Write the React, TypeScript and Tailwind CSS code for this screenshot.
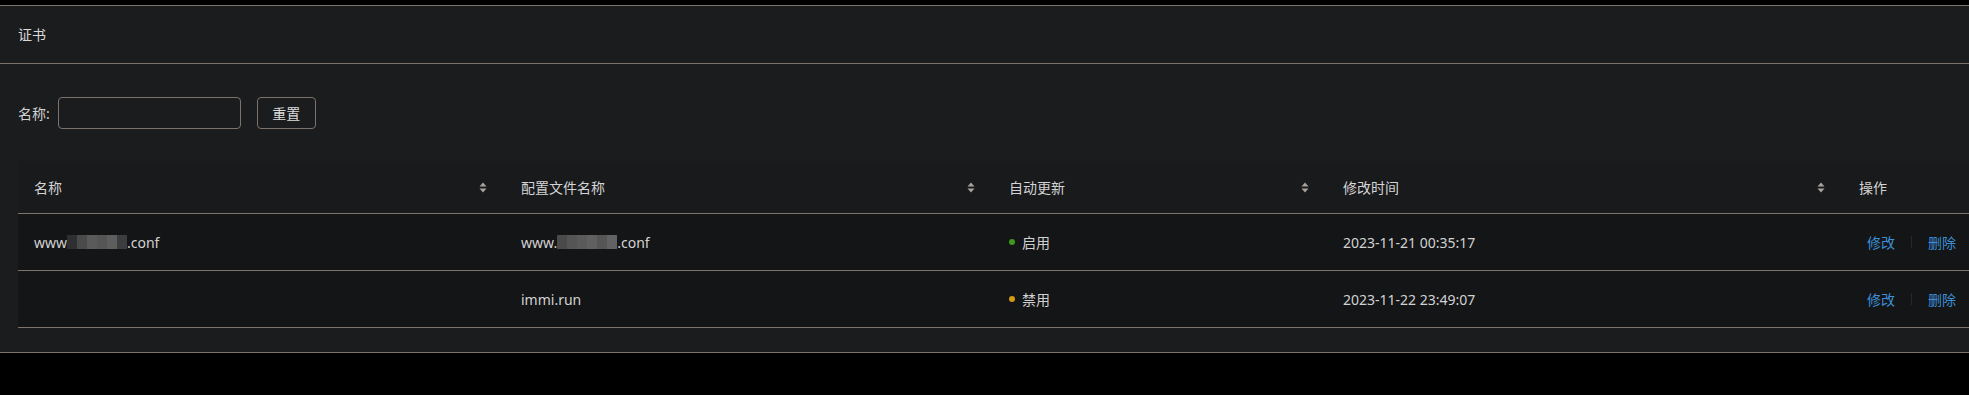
type Row = {
  name?: React.ReactNode
  file: React.ReactNode
  enabled: boolean
  time: string
}

function SortIcon() {
  return (
    <svg width="8" height="11" viewBox="0 0 8 11" className="shrink-0">
      <path d="M4 0.5 L7.5 4.5 L0.5 4.5 Z" fill="#a8a29c" />
      <path d="M4 10.5 L7.5 6.5 L0.5 6.5 Z" fill="#a8a29c" />
    </svg>
  )
}

function Blurred({ prefix, blocks }: { prefix: string; blocks: string[] }) {
  return (
    <span className="inline-flex items-center">
      <span>{prefix}</span>
      <span className="flex h-[14px] items-stretch">
        {blocks.map((c, i) => (
          <span key={i} className="w-[10px]" style={{ background: c }} />
        ))}
      </span>
      <span>.conf</span>
    </span>
  )
}

const cols = 'grid grid-cols-[487px_488px_334px_516px_160px]'

export default function App() {
  const rows: Row[] = [
    {
      name: <Blurred prefix="www" blocks={['#2e2f31', '#4a4a4b', '#5a5a5b', '#555556', '#5e5e5f', '#3c3d3f']} />,
      file: <Blurred prefix="www." blocks={['#4a4a4b', '#555556', '#5a5a5b', '#606061', '#555556', '#626263']} />,
      enabled: true,
      time: '2023-11-21 00:35:17',
    },
    { file: 'immi.run', enabled: false, time: '2023-11-22 23:49:07' },
  ]

  return (
    <div
      className="h-[395px] w-[1969px] overflow-hidden bg-black pt-[5px] text-[14px] text-[#d2d2d2]"
      style={{ fontFamily: '"Noto Sans", "Noto Sans CJK SC", sans-serif' }}
    >
      <div className="w-[2000px] border-y border-[#7d736b] bg-[#1b1c1e]">
        <div className="flex h-[58px] items-center border-b border-[#7d736b] px-[18px] text-[#d9d9d9]">证书</div>

        <div className="px-[18px] pb-[24px] pt-[33px]">
          <div className="flex items-center">
            <span>名称:</span>
            <input className="ml-[8px] h-[32px] w-[183px] rounded-[4px] border border-[#7d736b] bg-transparent px-2 outline-none" />
            <button className="ml-[16px] h-[32px] w-[59px] rounded-[4px] border border-[#7d736b] text-[#dcdcdc]">重置</button>
          </div>

          <div className="mt-[32px] w-[1985px]">
            <div className={`${cols} h-[53px] items-center border-b border-[#7d736b] bg-[#191a1c] text-[#d4d4d4]`}>
              {['名称', '配置文件名称', '自动更新', '修改时间'].map((h) => (
                <div key={h} className="flex items-center justify-between pl-[16px] pr-[18px]">
                  <span>{h}</span>
                  <SortIcon />
                </div>
              ))}
              <div className="pl-[16px]">操作</div>
            </div>

            {rows.map((r, i) => (
              <div key={i} className={`${cols} h-[57px] items-center border-b border-[#7d736b] bg-[#141517]`}>
                <div className="pl-[16px]">{r.name}</div>
                <div className="pl-[16px]">{r.file}</div>
                <div className="flex items-center pl-[16px]">
                  <span className={`h-[6px] w-[6px] rounded-full ${r.enabled ? 'bg-[#3f9a1c]' : 'bg-[#d39a17]'}`} />
                  <span className="ml-[7px]">{r.enabled ? '启用' : '禁用'}</span>
                </div>
                <div className="pl-[16px]">{r.time}</div>
                <div className="flex items-center pl-[24px] text-[#3d8fd6]">
                  <span>修改</span>
                  <span className="mx-[16px] h-[12px] w-px bg-[#26282b]" />
                  <span>删除</span>
                </div>
              </div>
            ))}
          </div>
        </div>
      </div>
    </div>
  )
}
